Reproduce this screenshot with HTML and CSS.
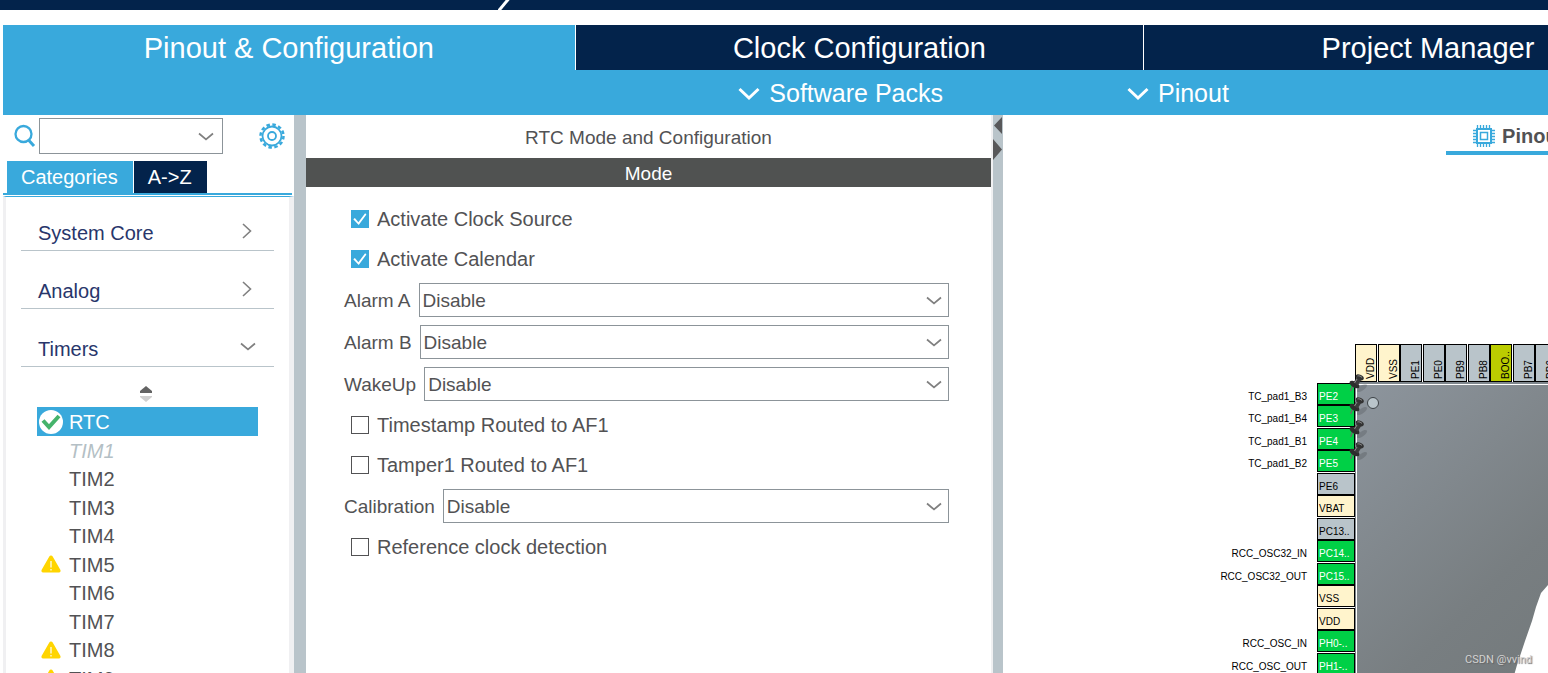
FILE: index.html
```
<!DOCTYPE html>
<html lang="en">
<head>
    <meta charset="UTF-8">
    <meta name="viewport" content="width=device-width, initial-scale=1.0">
    <title>Pinout &amp; Configuration</title>
    <link rel="stylesheet" href="styles.css">
</head>
<body>
    <!-- shared icons -->
    <svg class="sprite" aria-hidden="true">
        <symbol id="chevron-down" viewBox="0 0 16 10">
            <path d="M1 1.5l7 6 7-6" fill="none" stroke="currentColor" stroke-width="1.7"/>
        </symbol>
        <symbol id="chevron-bold" viewBox="0 0 22 14">
            <path d="M1.5 2l9.500 9 9.500-9" fill="none" stroke="currentColor" stroke-width="3"/>
        </symbol>
        <symbol id="chevron-right" viewBox="0 0 10 16">
            <path d="M1 1l7.500 7L1 15" fill="none" stroke="currentColor" stroke-width="1.6"/>
        </symbol>
        <symbol id="warning" viewBox="0 0 20 18">
            <path d="M10 .5c.8 0 1.300.4 1.700 1.100l7.600 13.200c.7 1.300.2 2.700-1.400 2.700H2.100C.5 17.500 0 16.100.7 14.800L8.300 1.600C8.700.9 9.200.5 10 .5z" fill="#ffd500"/>
            <path d="M10 6v6.500M10 14v1.500" stroke="#fff" stroke-width="1.2"/>
        </symbol>
        <symbol id="pushpin" viewBox="0 0 24 22">
            <ellipse cx="15" cy="15" rx="6" ry="2.500" fill="#000" opacity=".14" transform="rotate(-35 15 15)"/>
            <path d="M6 12l-2.500 6" stroke="#6b6b6b" stroke-width="1.500"/>
            <ellipse cx="7.500" cy="11.500" rx="5.500" ry="3" fill="#2d2d2d" transform="rotate(32 7.500 11.500)"/>
            <path d="M12.500 5L8.500 11" stroke="#3a3a3a" stroke-width="5"/>
            <ellipse cx="12.800" cy="4.300" rx="4.300" ry="2.500" fill="#333" transform="rotate(28 12.800 4.300)"/>
            <path d="M10.500 3c1.500-.6 3.500.3 4.500 1.500M10 6L7.500 10" fill="none" stroke="#8e8e8e" stroke-width="1"/>
        </symbol>
    </svg>

    <div class="titlebar">
        <svg class="slash" width="14" height="10" viewBox="0 0 14 10" aria-hidden="true">
            <path d="M0.500 11L10.500-1" stroke="#fff" stroke-width="3"/>
        </svg>
    </div>

    <nav class="main-tabs">
        <button type="button" class="main-tab active">Pinout &amp; Configuration</button>
        <button type="button" class="main-tab">Clock Configuration</button>
        <button type="button" class="main-tab">Project Manager</button>
    </nav>

    <div class="submenu">
        <button type="button" class="submenu-item">
            <svg width="22" height="14" aria-hidden="true"><use href="#chevron-bold"/></svg>
            Software Packs
        </button>
        <button type="button" class="submenu-item">
            <svg width="22" height="14" aria-hidden="true"><use href="#chevron-bold"/></svg>
            Pinout
        </button>
    </div>

    <main class="workspace">
        <aside class="sidebar">
            <div class="search">
                <svg width="24" height="24" viewBox="0 0 24 24" aria-hidden="true">
                    <circle cx="10.500" cy="10" r="8" fill="none" stroke="#39a9dc" stroke-width="2.300"/>
                    <path d="M15.500 16l5.500 6" stroke="#39a9dc" stroke-width="3"/>
                </svg>
                <div class="select-box search-box">
                    <select aria-label="Search">
                        <option></option>
                    </select>
                    <svg class="arrow" width="16" height="10" aria-hidden="true"><use href="#chevron-down"/></svg>
                </div>
                <button type="button" class="gear" aria-label="Settings">
                    <svg width="28" height="28" viewBox="0 0 28 28" fill="none" stroke="#39a9dc" aria-hidden="true">
                        <circle cx="14" cy="14" r="9.500" stroke-width="1.800"/>
                        <circle cx="14" cy="14" r="11.500" stroke-width="2.500" stroke-dasharray="3.500 2.521"/>
                        <circle cx="14" cy="14" r="4" stroke-width="1.800"/>
                    </svg>
                </button>
            </div>

            <div class="side-tabs">
                <button type="button" class="side-tab active">Categories</button>
                <button type="button" class="side-tab">A-&gt;Z</button>
            </div>

            <div class="categories">
                <button type="button" class="category">
                    System Core
                    <svg width="10" height="16" aria-hidden="true"><use href="#chevron-right"/></svg>
                </button>
                <button type="button" class="category">
                    Analog
                    <svg width="10" height="16" aria-hidden="true"><use href="#chevron-right"/></svg>
                </button>
                <button type="button" class="category open">
                    Timers
                    <svg width="16" height="10" aria-hidden="true"><use href="#chevron-down"/></svg>
                </button>

                <svg class="sort" width="12" height="16" viewBox="0 0 12 16" aria-hidden="true">
                    <path d="M6 0l6 5v2H0V5z" fill="#636363"/>
                    <path d="M0 10h12v1l-6 5-6-5z" fill="#cfcfcf"/>
                </svg>

                <ul class="peripherals">
                    <li class="selected">
                        <svg width="24" height="24" viewBox="0 0 24 24" aria-hidden="true">
                            <circle cx="12" cy="12" r="12" fill="#fff"/>
                            <path d="M4 10.500l6 6.500L20 6" fill="none" stroke="#45b36b" stroke-width="4"/>
                        </svg>
                        <span>RTC</span>
                    </li>
                    <li class="unavailable"><span>TIM1</span></li>
                    <li><span>TIM2</span></li>
                    <li><span>TIM3</span></li>
                    <li><span>TIM4</span></li>
                    <li><svg width="24" height="18" aria-hidden="true"><use href="#warning"/></svg><span>TIM5</span></li>
                    <li><span>TIM6</span></li>
                    <li><span>TIM7</span></li>
                    <li><svg width="24" height="18" aria-hidden="true"><use href="#warning"/></svg><span>TIM8</span></li>
                    <li><svg width="24" height="18" aria-hidden="true"><use href="#warning"/></svg><span>TIM9</span></li>
                </ul>
            </div>
        </aside>

        <div class="splitter"></div>

        <section class="mode">
            <h1>RTC Mode and Configuration</h1>
            <h2>Mode</h2>
            <form>
                <label class="check-row"><input type="checkbox" checked>Activate Clock Source</label>
                <label class="check-row"><input type="checkbox" checked>Activate Calendar</label>
                <div class="field">
                    <label for="alarm-a">Alarm A</label>
                    <div class="select-box">
                        <select id="alarm-a"><option>Disable</option></select>
                        <svg class="arrow" width="16" height="10" aria-hidden="true"><use href="#chevron-down"/></svg>
                    </div>
                </div>
                <div class="field">
                    <label for="alarm-b">Alarm B</label>
                    <div class="select-box">
                        <select id="alarm-b"><option>Disable</option></select>
                        <svg class="arrow" width="16" height="10" aria-hidden="true"><use href="#chevron-down"/></svg>
                    </div>
                </div>
                <div class="field">
                    <label for="wakeup">WakeUp</label>
                    <div class="select-box">
                        <select id="wakeup"><option>Disable</option></select>
                        <svg class="arrow" width="16" height="10" aria-hidden="true"><use href="#chevron-down"/></svg>
                    </div>
                </div>
                <label class="check-row"><input type="checkbox">Timestamp Routed to AF1</label>
                <label class="check-row"><input type="checkbox">Tamper1 Routed to AF1</label>
                <div class="field">
                    <label for="calibration">Calibration</label>
                    <div class="select-box">
                        <select id="calibration"><option>Disable</option></select>
                        <svg class="arrow" width="16" height="10" aria-hidden="true"><use href="#chevron-down"/></svg>
                    </div>
                </div>
                <label class="check-row"><input type="checkbox">Reference clock detection</label>
            </form>
        </section>

        <div class="splitter">
            <svg width="10" height="46" viewBox="0 0 10 46" aria-hidden="true">
                <path d="M9 2v17L1 10.500zM0 24v21l9-10.500z" fill="#58585a"/>
            </svg>
        </div>

        <section class="pinout">
            <div class="view-tabs">
                <button type="button" class="view-tab">
                    <svg width="22" height="22" viewBox="0 0 22 22" fill="none" stroke="#39a9dc" aria-hidden="true">
                        <rect x="4" y="4" width="14" height="14" stroke-width="2"/>
                        <rect x="7.500" y="7.500" width="7" height="7" stroke-width="1.500"/>
                        <path d="M4.500 0v4M7.500 0v4M10.500 0v4M13.500 0v4M16.500 0v4M4.500 18v4M7.500 18v4M10.500 18v4M13.500 18v4M16.500 18v4M0 5.500h4M0 8.500h4M0 11.500h4M0 14.500h4M0 17.500h4M18 5.500h4M18 8.500h4M18 11.500h4M18 14.500h4M18 17.500h4" stroke-width="1.300"/>
                    </svg>
                    Pinout view
                </button>
            </div>

            <div class="chip">
                <ul class="pins-top">
                    <li class="power">VDD</li>
                    <li class="power">VSS</li>
                    <li>PE1</li>
                    <li>PE0</li>
                    <li>PB9</li>
                    <li>PB8</li>
                    <li class="boot">BOO..</li>
                    <li>PB7</li>
                    <li>PB6</li>
                </ul>
                <ul class="pins-left">
                    <li>TC_pad1_B3 <span class="pin used">PE2</span></li>
                    <li>TC_pad1_B4 <span class="pin used">PE3</span></li>
                    <li>TC_pad1_B1 <span class="pin used">PE4</span></li>
                    <li>TC_pad1_B2 <span class="pin used">PE5</span></li>
                    <li><span class="pin">PE6</span></li>
                    <li><span class="pin power">VBAT</span></li>
                    <li><span class="pin">PC13..</span></li>
                    <li>RCC_OSC32_IN <span class="pin used">PC14..</span></li>
                    <li>RCC_OSC32_OUT <span class="pin used">PC15..</span></li>
                    <li><span class="pin power">VSS</span></li>
                    <li><span class="pin power">VDD</span></li>
                    <li>RCC_OSC_IN <span class="pin used">PH0-..</span></li>
                    <li>RCC_OSC_OUT <span class="pin used">PH1-..</span></li>
                </ul>
                <div class="package">
                    <svg class="package-art" width="300" height="300" viewBox="0 0 300 300" aria-hidden="true">
                        <!-- package logo -->
                        <path d="M300 150H215L193 203l-7 8-5 14-4 14-7 20-8 24-4 14h142z" fill="#fff"/>
                        <circle cx="18" cy="21" r="5.500" fill="#b9c4ca" stroke="#3c4246"/>
                        <use href="#pushpin" x="-8" y="-9" width="24" height="22"/>
                        <use href="#pushpin" x="-8" y="14" width="24" height="22"/>
                        <use href="#pushpin" x="-8" y="37" width="24" height="22"/>
                        <use href="#pushpin" x="-8" y="59" width="24" height="22"/>
                    </svg>
                </div>
            </div>
        </section>
    </main>

    <div class="watermark">CSDN @vvind</div>
</body>
</html>
```
FILE: styles.css
```
* {
    box-sizing: border-box;
}

body {
    margin: 0;
    height: 100vh;
    overflow: hidden;
    display: flex;
    flex-direction: column;
    position: relative;
    background: #fff;
    color: #525254;
    font-family: "Liberation Sans", Arial, sans-serif;
    font-size: 20px;
}

button,
select {
    font: inherit;
    color: inherit;
    border: 0;
    background: none;
    padding: 0;
    margin: 0;
}

svg {
    display: block;
    flex: none;
}

ul {
    list-style: none;
    margin: 0;
    padding: 0;
}

.sprite {
    display: none;
}

/* header */
.titlebar {
    flex: none;
    height: 10px;
    margin-bottom: 15px;
    padding-left: 32%;
    background: #03234b;
}

.slash {
    margin-left: 3px;
}

.main-tabs {
    flex: none;
    display: flex;
    height: 45px;
    margin-left: 3px;
    overflow: hidden;
}

.main-tab {
    flex: 0 0 36.8%;
    padding-top: 2px;
    background: #03234b;
    border-left: 1px solid #fff;
    color: #fff;
    font-size: 29px;
}

.main-tab.active {
    flex-basis: 37%;
    background: #39a9dc;
    border-left: 0;
}

.submenu {
    flex: none;
    display: flex;
    gap: 184px;
    height: 45px;
    margin-left: 3px;
    padding-top: 2px;
    padding-left: 47.5%;
    background: #39a9dc;
}

.submenu-item {
    display: flex;
    align-items: center;
    gap: 9px;
    color: #fff;
    font-size: 25px;
    white-space: nowrap;
}

.workspace {
    flex: 1;
    min-height: 0;
    display: grid;
    grid-template-columns: 291px 12px minmax(0, 687fr) 10px minmax(0, 545fr);
    grid-template-rows: minmax(0, 1fr);
    margin-left: 3px;
}

.splitter {
    background: #b9c4ca;
}

/* left panel */
.sidebar {
    display: flex;
    flex-direction: column;
    overflow: hidden;
}

.search {
    flex: none;
    display: flex;
    align-items: center;
    height: 46px;
    padding: 0 8px 4px 10px;
    gap: 2px;
}

.gear {
    margin-left: auto;
}

.side-tabs {
    flex: none;
    display: flex;
    gap: 1px;
    padding-left: 4px;
    margin-right: 2px;
    border-bottom: 2px solid #39a9dc;
}

.side-tab {
    height: 32px;
    padding: 0 15px 0 14px;
    background: #03234b;
    color: #fff;
}

.side-tab.active {
    background: #39a9dc;
}

.categories {
    flex: 1;
    min-height: 0;
    margin-top: 1px;
    padding: 20px 15px 0 15px;
    border-top: 1px solid #39a9dc;
    border-left: 3px solid #f0f0f2;
    border-right: 5px solid #f0f0f2;
}

.category {
    display: flex;
    align-items: center;
    justify-content: space-between;
    width: 100%;
    height: 34px;
    margin-bottom: 24px;
    padding: 0 22px 0 17px;
    border-bottom: 1px solid #b9c4ca;
    color: #28366b;
    font-size: 20px;
}

.category svg {
    color: #808080;
    margin-bottom: 6px;
}

.category.open {
    padding-right: 18px;
    margin-bottom: 19px;
}

.sort {
    margin: 0 auto 5px 119px;
}

.peripherals {
    display: grid;
    grid-auto-rows: 29px 28px;
    margin: 0 16px;
}

.peripherals li {
    display: grid;
    grid-template-columns: 24px 1fr;
    column-gap: 6px;
    align-items: center;
    padding-left: 2px;
}

.peripherals span {
    grid-column: 2;
    padding-top: 2px;
}

.peripherals .selected {
    background: #39a9dc;
    color: #fff;
}

.peripherals .unavailable {
    color: #b4bfc5;
    font-style: italic;
}

/* mode panel */
.mode {
    border-right: 2px solid #f0f0f2;
}

.mode h1,
.mode h2 {
    margin: 0;
    padding-top: 2px;
    text-align: center;
    font-size: 19px;
    font-weight: normal;
}

.mode h1 {
    line-height: 41px;
}

.mode h2 {
    background: #505251;
    color: #fff;
    line-height: 27px;
}

.mode form {
    padding: 12px 42px 0 38px;
}

.check-row {
    display: flex;
    align-items: center;
    gap: 8px;
    height: 40px;
    padding-left: 7px;
}

.check-row input {
    appearance: none;
    width: 18px;
    height: 18px;
    margin: 0;
    border: 1px solid #525254;
    background: #fff;
}

.check-row input:checked {
    display: grid;
    border-color: #39a9dc;
    background: #39a9dc;
}

.check-row input:checked::before {
    content: "";
    background: #fff;
    clip-path: polygon(8% 52%, 18% 44%, 40% 70%, 82% 14%, 90% 22%, 42% 88%);
}

.field {
    display: flex;
    align-items: center;
    gap: 8px;
    height: 42px;
    font-size: 19px;
}

.field label {
    padding-top: 2px;
}

.select-box {
    position: relative;
    flex: 1;
}

.select-box select {
    appearance: none;
    display: block;
    width: 100%;
    height: 34px;
    padding: 0 28px 0 3px;
    border: 1px solid #8c9499;
    border-radius: 0;
    background: #fff;
}

.select-box .arrow {
    position: absolute;
    top: 50%;
    right: 7px;
    margin-top: -4px;
    color: #808080;
    pointer-events: none;
}

.search-box {
    flex: 0 0 184px;
}

.search-box select {
    height: 36px;
}

.search-box .arrow {
    right: 9px;
}

/* pinout panel */
.pinout {
    display: flex;
    flex-direction: column;
    overflow: hidden;
}

.view-tabs {
    flex: none;
    margin-left: 81.3%;
    overflow: hidden;
}

.view-tab {
    display: flex;
    align-items: center;
    gap: 7px;
    height: 40px;
    padding: 6px 27px 0;
    border-bottom: 4px solid #39a9dc;
    font-weight: bold;
    white-space: nowrap;
}

.chip {
    flex: 1;
    min-height: 0;
    display: grid;
    grid-template-columns: minmax(0, 1fr) 35.4%;
    grid-template-rows: 38px minmax(0, 1fr);
    margin-top: 189px;
    color: #000;
    font-size: 10px;
    line-height: 12px;
}

.pins-top {
    grid-column: 2;
    display: grid;
    grid-auto-flow: column;
    grid-auto-columns: 23px 22px;
    justify-content: start;
    overflow: hidden;
}

.pins-top li {
    width: 22px;
    padding: 2px 9px 2px 3px;
    border: 1px solid #000;
    background: #b9c4ca;
    writing-mode: vertical-rl;
    transform: rotate(180deg);
}

.pins-left {
    display: grid;
    grid-auto-rows: 22px 23px;
    padding-top: 1px;
}

.pins-left li {
    display: flex;
    justify-content: flex-end;
    gap: 10px;
    height: 22px;
    line-height: 28px;
    white-space: nowrap;
}

.pin {
    width: 38px;
    padding-left: 1px;
    border: 1px solid #000;
    background: #b9c4ca;
    line-height: 26px;
}

.pin.used {
    background: #00d046;
    color: #fff;
}

.pins-top .power,
.pin.power {
    background: #fff4cc;
}

.pins-top .boot {
    background: #bbcc00;
}

.package {
    position: relative;
    border-top: 2px solid #7f878d;
    border-left: 1px solid #7f878d;
    background: linear-gradient(135deg, #8d959d, #787e81 70%, #747a7c);
    box-shadow: inset 1px 1px #fff;
}

/* pushpins reach over the left pins */
.package-art {
    position: absolute;
    top: -2px;
    left: -1px;
    overflow: visible;
}

.watermark {
    position: absolute;
    right: 16px;
    bottom: 7px;
    color: #d2d2d2;
    font-family: Roboto, sans-serif;
    font-size: 11px;
    line-height: 13px;
    text-shadow: 1px 1px 1px #666;
}
```
